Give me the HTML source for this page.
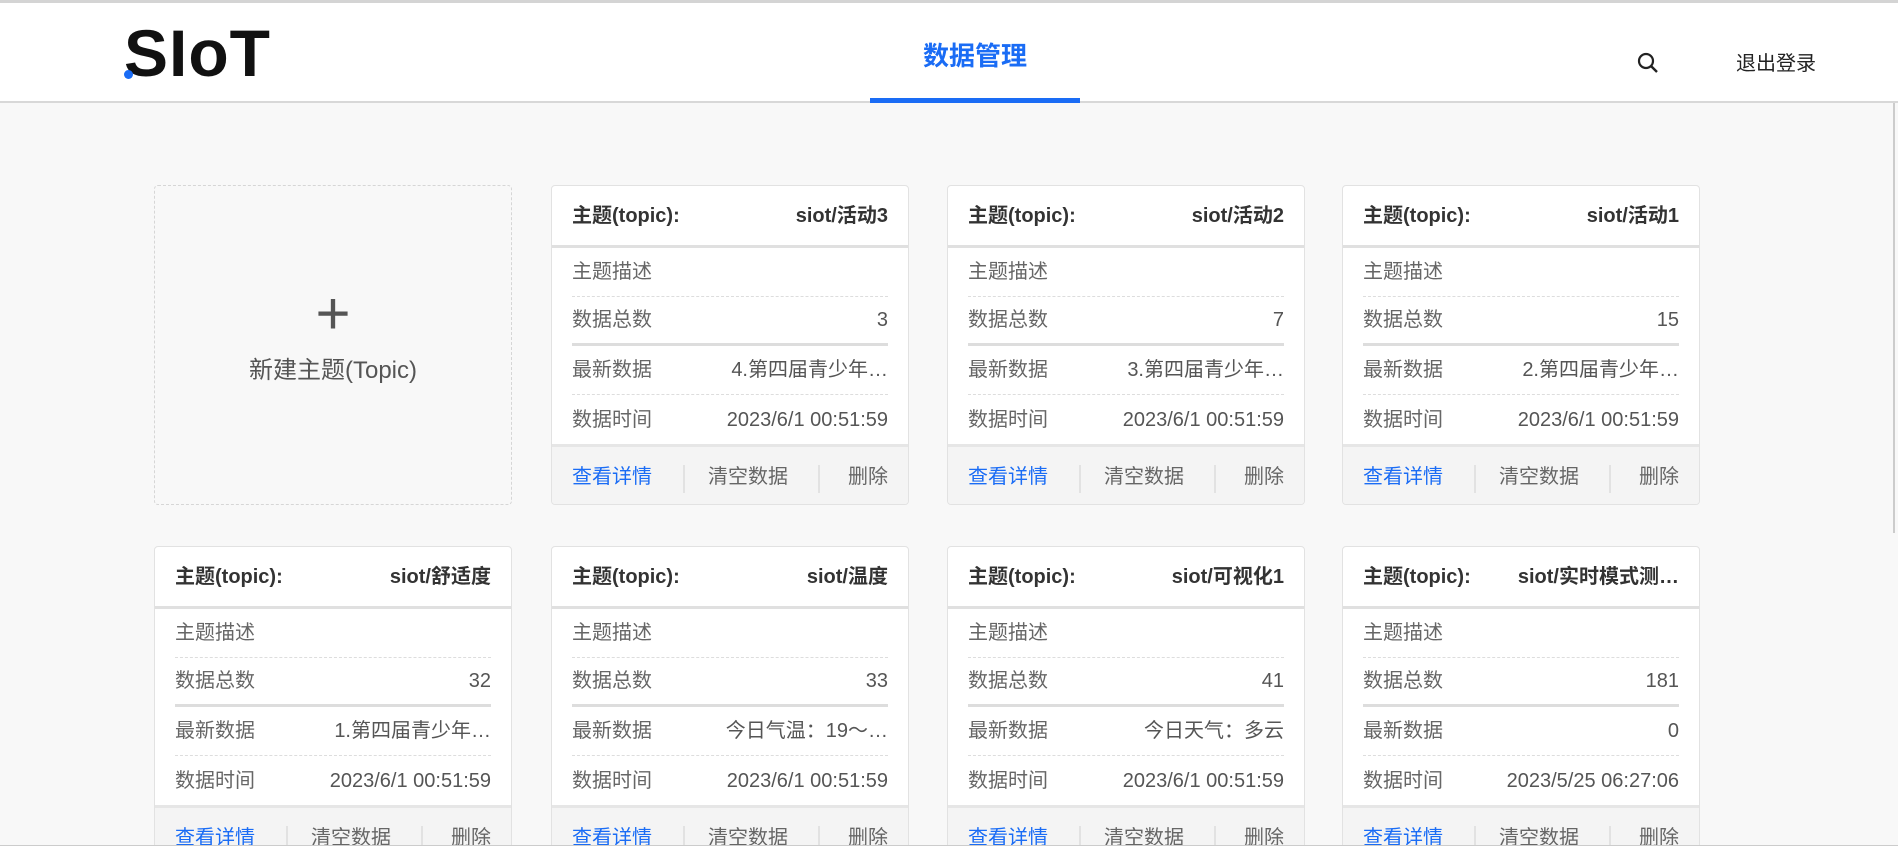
<!DOCTYPE html>
<html><head><meta charset="utf-8"><style>
*{margin:0;padding:0;box-sizing:border-box}
html,body{width:1898px;height:856px;overflow:hidden}
body{background:#f8f8f8;font-family:"Liberation Sans","Noto Sans CJK SC",sans-serif;position:relative}
.top{position:absolute;left:0;top:0;width:1898px;height:103px;background:#fff;border-top:3px solid #d4d4d4;border-bottom:2px solid #d8d8d8}
.logo{position:absolute;left:124px;top:12px;font-size:66px;font-weight:bold;color:#111;letter-spacing:1px;line-height:76px;font-family:"Liberation Sans",sans-serif}
.dot{position:absolute;left:124px;top:70px;width:9px;height:9px;border-radius:50%;background:#1a6cf5}
.nav{position:absolute;left:870px;top:0;width:210px;height:100px;text-align:center;line-height:106px;font-size:26px;font-weight:bold;color:#1a6cf5;border-bottom:5px solid #1a6cf5}
.search{position:absolute;left:1636px;top:48px}
.logout{position:absolute;left:1736px;top:44px;font-size:20px;color:#222}
.sb{position:absolute;left:1893px;top:103px;width:2px;height:430px;background:#ccc}
.card{position:absolute;width:358px;height:320px;background:#fff;border:1px solid #e2e2e2;border-radius:4px;overflow:hidden}
.hd{height:62px;border-bottom:3px solid #e0e0e0;display:flex;justify-content:space-between;align-items:center;padding:0 20px;font-size:20px;font-weight:bold;color:#333;white-space:nowrap}
.hd span{line-height:30px;display:block}
.hd span:last-child{overflow:hidden;text-overflow:ellipsis;margin-left:18px;max-width:180px}
.bd{padding:0 20px}
.row{height:49px;display:flex;align-items:center;justify-content:space-between;font-size:20px;color:#666;border-bottom:1px dashed #ddd;white-space:nowrap}
.row span{line-height:30px;display:block}
.row.s{border-bottom:3px solid #ddd}
.row.n{border-bottom:none}
.row .v{color:#555;overflow:hidden;text-overflow:ellipsis;max-width:175px;text-align:right}
.ft{position:absolute;left:0;right:0;top:258px;height:62px;background:#f4f4f4;border-top:3px solid #e6e6e6;font-size:20px;color:#666}
.ft span{position:absolute;top:15px;line-height:30px}
.ft i{position:absolute;top:18px;width:2px;height:28px;background:#e2e2e2}
.new{position:absolute;left:154px;top:185px;width:358px;height:320px;border:1px dashed #d6d6d6;border-radius:4px;background:#f8f8f8;text-align:center;color:#555}
.bot{position:absolute;left:0;top:845px;width:1898px;height:11px;background:#fff;border-top:1px solid #ccc;z-index:5}
</style></head><body>
<div class="top">
<div class="logo">SIoT</div>
<div class="nav">数据管理</div>
<svg class="search" width="24" height="24" viewBox="0 0 24 24"><circle cx="10" cy="10" r="7" fill="none" stroke="#222" stroke-width="2.2"/><path d="M15 15l6 6" stroke="#222" stroke-width="2.4"/></svg>
<div class="logout">退出登录</div>
</div>
<div class="dot"></div>
<div class="sb"></div>
<div class="new"><div style="font-size:60px;font-weight:200;line-height:60px;margin-top:98px;color:#555">+</div><div style="font-size:24px;margin-top:6px">新建主题(Topic)</div></div>

<div class="card" style="left:551px;top:185px"><div class="hd"><span>主题(topic):</span><span>siot/活动3</span></div><div class="bd"><div class="row"><span>主题描述</span></div><div class="row s"><span>数据总数</span><span class="v">3</span></div><div class="row"><span>最新数据</span><span class="v">4.第四届青少年…</span></div><div class="row n"><span>数据时间</span><span class="v">2023/6/1 00:51:59</span></div></div><div class="ft"><span style="left:20px;color:#1a6cf5">查看详情</span><i style="left:131px"></i><span style="left:156px">清空数据</span><i style="left:266px"></i><span style="right:20px">删除</span></div></div>
<div class="card" style="left:947px;top:185px"><div class="hd"><span>主题(topic):</span><span>siot/活动2</span></div><div class="bd"><div class="row"><span>主题描述</span></div><div class="row s"><span>数据总数</span><span class="v">7</span></div><div class="row"><span>最新数据</span><span class="v">3.第四届青少年…</span></div><div class="row n"><span>数据时间</span><span class="v">2023/6/1 00:51:59</span></div></div><div class="ft"><span style="left:20px;color:#1a6cf5">查看详情</span><i style="left:131px"></i><span style="left:156px">清空数据</span><i style="left:266px"></i><span style="right:20px">删除</span></div></div>
<div class="card" style="left:1342px;top:185px"><div class="hd"><span>主题(topic):</span><span>siot/活动1</span></div><div class="bd"><div class="row"><span>主题描述</span></div><div class="row s"><span>数据总数</span><span class="v">15</span></div><div class="row"><span>最新数据</span><span class="v">2.第四届青少年…</span></div><div class="row n"><span>数据时间</span><span class="v">2023/6/1 00:51:59</span></div></div><div class="ft"><span style="left:20px;color:#1a6cf5">查看详情</span><i style="left:131px"></i><span style="left:156px">清空数据</span><i style="left:266px"></i><span style="right:20px">删除</span></div></div>

<div class="card" style="left:154px;top:546px"><div class="hd"><span>主题(topic):</span><span>siot/舒适度</span></div><div class="bd"><div class="row"><span>主题描述</span></div><div class="row s"><span>数据总数</span><span class="v">32</span></div><div class="row"><span>最新数据</span><span class="v">1.第四届青少年…</span></div><div class="row n"><span>数据时间</span><span class="v">2023/6/1 00:51:59</span></div></div><div class="ft"><span style="left:20px;color:#1a6cf5">查看详情</span><i style="left:131px"></i><span style="left:156px">清空数据</span><i style="left:266px"></i><span style="right:20px">删除</span></div></div>
<div class="card" style="left:551px;top:546px"><div class="hd"><span>主题(topic):</span><span>siot/温度</span></div><div class="bd"><div class="row"><span>主题描述</span></div><div class="row s"><span>数据总数</span><span class="v">33</span></div><div class="row"><span>最新数据</span><span class="v">今日气温：19～…</span></div><div class="row n"><span>数据时间</span><span class="v">2023/6/1 00:51:59</span></div></div><div class="ft"><span style="left:20px;color:#1a6cf5">查看详情</span><i style="left:131px"></i><span style="left:156px">清空数据</span><i style="left:266px"></i><span style="right:20px">删除</span></div></div>
<div class="card" style="left:947px;top:546px"><div class="hd"><span>主题(topic):</span><span>siot/可视化1</span></div><div class="bd"><div class="row"><span>主题描述</span></div><div class="row s"><span>数据总数</span><span class="v">41</span></div><div class="row"><span>最新数据</span><span class="v">今日天气：多云</span></div><div class="row n"><span>数据时间</span><span class="v">2023/6/1 00:51:59</span></div></div><div class="ft"><span style="left:20px;color:#1a6cf5">查看详情</span><i style="left:131px"></i><span style="left:156px">清空数据</span><i style="left:266px"></i><span style="right:20px">删除</span></div></div>
<div class="card" style="left:1342px;top:546px"><div class="hd"><span>主题(topic):</span><span>siot/实时模式测…</span></div><div class="bd"><div class="row"><span>主题描述</span></div><div class="row s"><span>数据总数</span><span class="v">181</span></div><div class="row"><span>最新数据</span><span class="v">0</span></div><div class="row n"><span>数据时间</span><span class="v">2023/5/25 06:27:06</span></div></div><div class="ft"><span style="left:20px;color:#1a6cf5">查看详情</span><i style="left:131px"></i><span style="left:156px">清空数据</span><i style="left:266px"></i><span style="right:20px">删除</span></div></div>
<div class="bot"></div>
</body></html>
